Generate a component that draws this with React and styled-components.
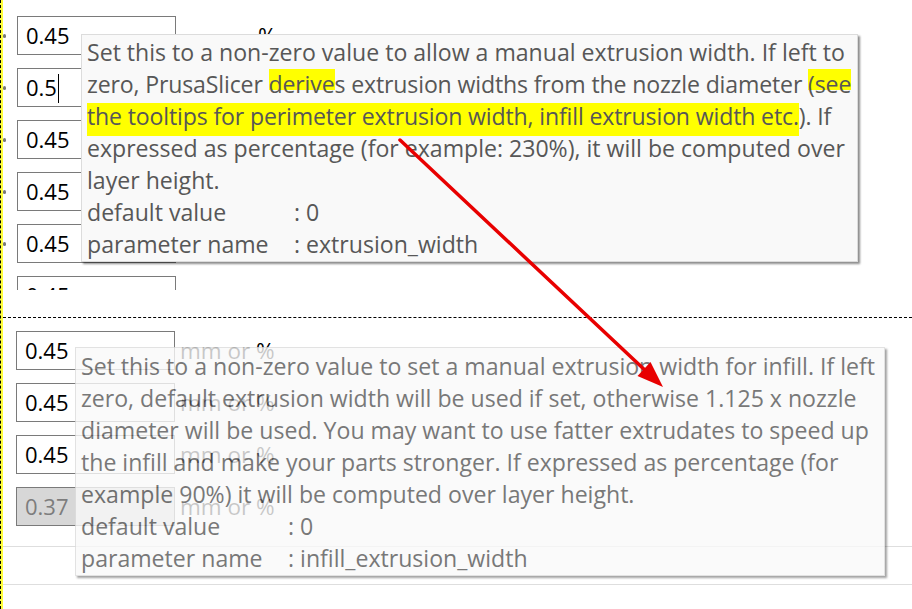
import React from "react";
import styled, { createGlobalStyle } from "styled-components";

const GlobalStyle = createGlobalStyle`
  html, body {
    margin: 0;
    padding: 0;
    background: #fff;
  }
  body {
    font-family: "Open Sans", "Noto Sans", sans-serif;
  }
`;

const Page = styled.div`
  position: relative;
  width: 912px;
  height: 609px;
  overflow: hidden;
  display: flex;
  background: #fff;
`;

const FocusStrip = styled.div`
  width: 2px;
  flex-shrink: 0;
  background: #ffff3c;
  border-left: 1px dashed #000;
`;

const Main = styled.div`
  flex: 1;
  display: flex;
  flex-direction: column;
`;

const Panel = styled.div`
  display: flex;
  flex-direction: column;
  gap: 13px;
  padding-top: ${(p) => p.$top}px;
  height: ${(p) => (p.$height ? `${p.$height}px` : "auto")};
  overflow: hidden;
  box-sizing: border-box;
`;

const Row = styled.div`
  display: flex;
  align-items: center;
  height: 39px;
  flex-shrink: 0;
`;

const LabelTail = styled.div`
  width: ${(p) => p.$indent}px;
  flex-shrink: 0;
  display: flex;
  align-items: center;
  &::before {
    content: "";
    width: 3px;
    height: 4px;
    border-radius: 2px;
    background: ${(p) => (p.$dot ? "#777" : "transparent")};
  }
`;

const Field = styled.div`
  position: relative;
  width: 159px;
  height: 39px;
  box-sizing: border-box;
  border: 1px solid #7a7a7a;
  background: ${(p) => (p.$disabled ? "#d7d7d7" : "#fff")};
  color: ${(p) => (p.$disabled ? "#7d7d7d" : "#000")};
  font-size: 22px;
  line-height: 37px;
  padding-left: 8px;
  flex-shrink: 0;
`;

const Caret = styled.span`
  display: inline-block;
  width: 1px;
  height: 29px;
  background: #000;
  vertical-align: middle;
  margin-left: 1px;
  margin-top: -4px;
`;

const Units = styled.span`
  margin-left: ${(p) => p.$offset}px;
  font-size: 22.5px;
  color: #000;
  white-space: nowrap;
`;

const Gap = styled.div`
  height: ${(p) => p.$h}px;
  flex-shrink: 0;
`;

const DashedRule = styled.div`
  height: 0;
  border-top: 1px dashed #000;
  flex-shrink: 0;
`;

const Rule = styled.div`
  height: 0;
  border-top: 1px solid #dedede;
  flex-shrink: 0;
`;

const Tooltip = styled.div`
  position: absolute;
  left: ${(p) => p.$x}px;
  top: ${(p) => p.$y}px;
  width: ${(p) => p.$w}px;
  box-sizing: border-box;
  padding: ${(p) => p.$pad};
  background: #f9f9f9;
  border: 1px solid #dcdcdc;
  box-shadow: 2px 2px 2px rgba(0, 0, 0, 0.45);
  color: #575757;
  font-size: 23.1px;
  line-height: 32px;
  opacity: ${(p) => p.$opacity};
  white-space: nowrap;
`;

const Line = styled.div`
  letter-spacing: ${(p) => (p.$tight ? "-0.15px" : "normal")};
`;

const ParamRow = styled.div`
  display: grid;
  grid-template-columns: 207px auto;
`;

const Mark = styled.span`
  background: linear-gradient(#ffff00, #ffff00) no-repeat;
  background-position: 0 ${(p) => (p.$tall ? 3 : 1)}px;
  background-size: 100% ${(p) => (p.$tall ? 33 : 21)}px;
  padding-bottom: ${(p) => (p.$tall ? 6 : 0)}px;
`;

const Overlay = styled.svg`
  position: absolute;
  left: 0;
  top: 0;
  width: 912px;
  height: 609px;
  pointer-events: none;
`;

const topRows = [
  { value: "0.45", units: "%" },
  { value: "0.5", caret: true },
  { value: "0.45" },
  { value: "0.45" },
  { value: "0.45" },
  { value: "0.45" },
];

const bottomRows = [
  { value: "0.45", units: "mm or %" },
  { value: "0.45", units: "mm or %" },
  { value: "0.45", units: "mm or %" },
  { value: "0.37", units: "mm or %", disabled: true },
];

function App() {
  return (
    <>
      <GlobalStyle />
      <Page>
        <FocusStrip />
        <Main>
          <Panel $top={16} $height={290}>
            {topRows.map((r, i) => (
              <Row key={i}>
                <LabelTail $indent={14} $dot={i < 5} />
                <Field>
                  {r.value}
                  {r.caret && <Caret />}
                </Field>
                {r.units && <Units $offset={82}>{r.units}</Units>}
              </Row>
            ))}
          </Panel>
          <Gap $h={27} />
          <DashedRule />
          <Panel $top={13}>
            {bottomRows.map((r, i) => (
              <Row key={i}>
                <LabelTail $indent={13} />
                <Field $disabled={r.disabled}>{r.value}</Field>
                <Units $offset={5}>{r.units}</Units>
              </Row>
            ))}
          </Panel>
          <Gap $h={20} />
          <Rule />
          <Gap $h={37} />
          <Rule />
        </Main>

        <Tooltip $x={81} $y={34} $w={777} $pad="1px 0 1px 5px" $opacity={1}>
          <Line>Set this to a non-zero value to allow a manual extrusion width. If left to</Line>
          <Line $tight>
            zero, PrusaSlicer <Mark>derive</Mark>s extrusion widths from the nozzle diameter <Mark>(see</Mark>
          </Line>
          <Line $tight>
            <Mark $tall>the tooltips for perimeter extrusion width, infill extrusion width etc.</Mark>). If
          </Line>
          <Line>expressed as percentage (for example: 230%), it will be computed over</Line>
          <Line>layer height.</Line>
          <ParamRow>
            <span>default value</span>
            <span>: 0</span>
          </ParamRow>
          <ParamRow>
            <span>parameter name</span>
            <span>: extrusion_width</span>
          </ParamRow>
        </Tooltip>

        <Tooltip $x={75} $y={347} $w={810} $pad="2px 0 1px 5px" $opacity={0.8}>
          <Line>Set this to a non-zero value to set a manual extrusion width for infill. If left</Line>
          <Line>zero, default extrusion width will be used if set, otherwise 1.125 x nozzle</Line>
          <Line>diameter will be used. You may want to use fatter extrudates to speed up</Line>
          <Line>the infill and make your parts stronger. If expressed as percentage (for</Line>
          <Line>example 90%) it will be computed over layer height.</Line>
          <ParamRow>
            <span>default value</span>
            <span>: 0</span>
          </ParamRow>
          <ParamRow>
            <span>parameter name</span>
            <span>: infill_extrusion_width</span>
          </ParamRow>
        </Tooltip>

        <Overlay viewBox="0 0 912 609">
          <line x1="400" y1="140" x2="648" y2="373" stroke="#e80000" strokeWidth="3.5" strokeLinecap="round" />
          <polygon points="663,387 637.5,376 650.5,362" fill="#e80000" />
        </Overlay>
      </Page>
    </>
  );
}

export default App;
